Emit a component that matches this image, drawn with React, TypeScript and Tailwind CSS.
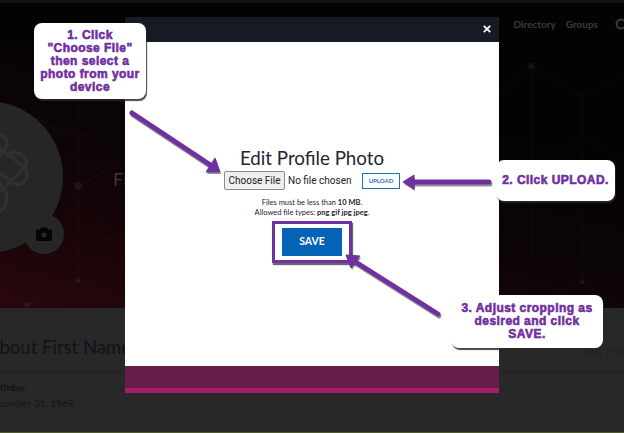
const Callout = ({ className, children }: { className: string; children: React.ReactNode }) => (
  <div
    className={`absolute flex items-center justify-center rounded-lg bg-white text-center font-['Liberation_Sans',sans-serif] font-bold tracking-[0.45px] text-[#7030a0] [-webkit-text-stroke:0.6px_#7030a0] shadow-[1px_2px_1px_rgba(40,40,40,0.85)] ${className}`}
  >
    {children}
  </div>
);

const Arrow = ({ x1, y1, x2, y2, head }: { x1: number; y1: number; x2: number; y2: number; head: string }) => (
  <>
    <line x1={x1 + 1} y1={y1 + 2} x2={x2 + 1} y2={y2 + 2} stroke="#3a3a3a" strokeOpacity="0.55" strokeWidth="5" strokeLinecap="round" />
    <path d={head} fill="#3a3a3a" fillOpacity="0.55" transform="translate(1 2)" />
    <line x1={x1} y1={y1} x2={x2} y2={y2} stroke="#7030a0" strokeWidth="5" strokeLinecap="round" />
    <path d={head} fill="#7030a0" stroke="#7030a0" strokeWidth="1" strokeLinejoin="round" />
  </>
);

const App = () => {
  return (
    <div className="relative flex h-[433px] w-[624px] flex-col overflow-hidden bg-[#282828] font-['Lato',sans-serif]">
      <div className="h-[3px] bg-[#121212]"></div>

      {/* nav */}
      <div className="flex h-[43px] items-center justify-end gap-[10px] bg-[#030304] pb-[1px] text-[10px] font-bold text-[#3a3a40]">
        <span>Directory</span>
        <span>Groups</span>
        <svg className="-mr-[4px] ml-[7px]" width="13" height="13" viewBox="0 0 13 13" fill="none" stroke="#3a3a40" strokeWidth="2">
          <circle cx="6" cy="6" r="4.5" />
        </svg>
      </div>

      {/* hero */}
      <div className="relative h-[262px] overflow-hidden bg-[linear-gradient(195deg,#030304_25%,#0c0406_55%,#1a0508_80%,#28070b_100%)]">
        <svg className="absolute inset-0" width="624" height="262" viewBox="0 0 624 262" fill="none" stroke="#ffffff" strokeOpacity="0.035">
          <path d="M78 40 V235 M30 70 L78 92 L125 70 M64 132 L78 140 L125 114 M78 235 L125 259 M78 235 L27 259 M0 240 L27 259 M78 180 L125 200" />
          <path d="M499 50 L532 20 L582 50 L624 30 M532 20 V212 M499 100 L532 120 L582 91 L624 115 M582 50 V236 M532 212 L582 189 L624 212 M582 236 L532 262 M582 236 L624 262" />
          <g fill="#ffffff" fillOpacity="0.05" stroke="none">
            <circle cx="78" cy="140" r="4" />
            <circle cx="78" cy="235" r="2.5" />
            <circle cx="27" cy="259" r="3" />
            <circle cx="531" cy="20" r="3.5" />
            <circle cx="582" cy="236" r="2.5" />
          </g>
        </svg>
        <div className="absolute left-[-89px] top-[55px] h-[152px] w-[152px] rounded-full bg-[#262626]"></div>
        <svg className="absolute left-0 top-[88px]" width="30" height="82" viewBox="0 0 30 82" fill="none" stroke="#303030" strokeWidth="3.5" strokeLinecap="round">
          <path d="M-4 4 C2 -2 8 4 7 10 C6 17 -2 20 -4 26 M-4 12 C6 18 16 26 24 34 C30 40 26 48 20 50 C14 52 10 46 4 42 L-4 36" />
          <path d="M8 22 C12 16 20 18 25 24 C29 30 24 34 18 40 L4 54 C-1 58 -4 60 -4 60" />
          <path d="M-4 48 C2 50 8 58 7 66 C6 74 0 78 -4 80" />
        </svg>
        <div className="absolute left-[24px] top-[168px] flex h-[40px] w-[40px] items-center justify-center rounded-full bg-[#262626]">
          <svg width="16" height="14" viewBox="0 0 16 14">
            <path fill="#050505" d="M5 0.5 H11 L12.2 2.5 H15 A1 1 0 0 1 16 3.5 V13 A1 1 0 0 1 15 14 H1 A1 1 0 0 1 0 13 V3.5 A1 1 0 0 1 1 2.5 H3.8 Z" />
            <circle cx="8" cy="8" r="2.6" fill="#262626" />
          </svg>
        </div>
        <span className="absolute left-[113px] top-[120px] text-[18px] text-[#39383b]">Fi</span>
      </div>

      {/* about section */}
      <div className="flex-1 bg-[#282828] text-[#11131a]">
        <div className="flex h-[64px] items-center justify-between border-b border-[#1f2128] pt-[17px]">
          <span className="-ml-[13px] whitespace-nowrap text-[18.5px]">About First Name</span>
          <span className="-mr-[12px] pt-[8px] text-[11px] text-[#1a2230]">Edit Profile</span>
        </div>
        <div className="-ml-[13px] pt-[7px] text-[10px] font-bold leading-[16px] text-[#11131a]">Birthday</div>
        <div className="-ml-[14px] whitespace-nowrap text-[10px] leading-[16px]">December 31, 1969</div>
      </div>
      <div className="h-[1px] bg-[#4c5a2c]"></div>

      {/* modal */}
      <div className="absolute left-[125px] top-[17px] flex h-[376px] w-[374px] flex-col">
        <div className="flex h-[25px] items-center justify-end bg-[#161a24] pb-[1px] pr-[8px]">
          <svg width="8" height="8" viewBox="0 0 8 8" stroke="#ffffff" strokeWidth="1.8">
            <path d="M0.8 0.8 L7.2 7.2 M7.2 0.8 L0.8 7.2" />
          </svg>
        </div>
        <div className="flex h-[324px] flex-col items-center bg-white pt-[104px] text-[#222630]">
          <h2 className="text-[18.75px] leading-[23px]">Edit Profile Photo</h2>
          <div className="mt-[2px] flex items-center">
            <div className="flex h-[19px] w-[61px] items-center justify-center rounded-[2px] border border-[#8a8a8a] bg-[#efefef] font-['Roboto',sans-serif] text-[10px] text-[#222222]">
              Choose File
            </div>
            <span className="ml-[3px] w-[74px] whitespace-nowrap font-['Roboto',sans-serif] text-[10px] text-[#222222]">No file chosen</span>
            <div className="flex h-[16px] w-[38px] items-center justify-center border-[1.5px] border-[#1c74bb] text-[6px] font-bold text-[#1c74bb]">UPLOAD</div>
          </div>
          <p className="mt-[8px] text-[7.5px] leading-[10px]">
            Files must be less than <b>10 MB</b>.
          </p>
          <p className="text-[7.5px] leading-[10px]">
            Allowed file types: <b>png gif jpg jpeg</b>.
          </p>
          <div className="mt-[3px] border-[3px] border-[#7030a0] bg-white px-[7px] py-[4px] shadow-[1px_2px_1px_rgba(40,40,40,0.7)]">
            <div className="flex h-[28px] w-[60px] items-center justify-center bg-[#0563b5] text-[10.5px] font-bold text-white">SAVE</div>
          </div>
        </div>
        <div className="h-[22px] bg-[#671d47]"></div>
        <div className="h-[5px] bg-[#a51f66]"></div>
      </div>

      {/* annotation arrows */}
      <svg className="absolute inset-0" width="624" height="433" viewBox="0 0 624 433">
        <Arrow x1={132} y1={113} x2={212} y2={166} head="M220 172 L206 172 L215 158 Z" />
        <Arrow x1={489} y1={182} x2={410} y2={182} head="M403 182 L414 175 L414 189 Z" />
        <Arrow x1={438} y1={314} x2={354} y2={261} head="M346 255 L360 256 L351 268 Z" />
      </svg>

      <Callout className="left-[34px] top-[23px] h-[76px] w-[112px] text-[12px] leading-[13px]">
        <span>
          1. Click
          <br />
          "Choose File"
          <br />
          then select a
          <br />
          photo from your
          <br />
          device
        </span>
      </Callout>
      <Callout className="left-[496px] top-[160px] h-[41px] w-[119px] pb-[2px] text-[12px]">2. Click UPLOAD.</Callout>
      <Callout className="left-[451px] top-[295px] h-[53px] w-[152px] px-[6px] text-[12px] leading-[13px]">
        <span>
          3. Adjust cropping as
          <br />
          desired and click
          <br />
          SAVE.
        </span>
      </Callout>
    </div>
  );
};

export default App;
